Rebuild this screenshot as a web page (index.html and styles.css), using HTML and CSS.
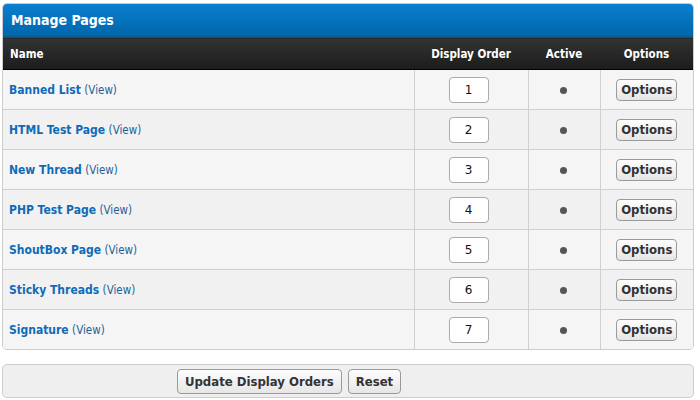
FILE: index.html
```html
<!DOCTYPE html>
<html>
<head>
<meta charset="utf-8">
<link rel="stylesheet" href="styles.css">
</head>
<body>
<div class="container">
  <div class="title">Manage Pages</div>
  <table class="grid">
    <thead>
      <tr>
        <th class="c-name">Name</th>
        <th class="c-order">Display Order</th>
        <th class="c-active">Active</th>
        <th class="c-opt">Options</th>
      </tr>
    </thead>
    <tbody>
      <tr><td class="c-name"><a class="page">Banned List</a> <a class="view">(View)</a></td><td class="c-order"><span class="num">1</span></td><td class="c-active"><span class="dot"></span></td><td class="c-opt"><span class="btn small">Options</span></td></tr>
      <tr><td class="c-name"><a class="page">HTML Test Page</a> <a class="view">(View)</a></td><td class="c-order"><span class="num">2</span></td><td class="c-active"><span class="dot"></span></td><td class="c-opt"><span class="btn small">Options</span></td></tr>
      <tr><td class="c-name"><a class="page">New Thread</a> <a class="view">(View)</a></td><td class="c-order"><span class="num">3</span></td><td class="c-active"><span class="dot"></span></td><td class="c-opt"><span class="btn small">Options</span></td></tr>
      <tr><td class="c-name"><a class="page">PHP Test Page</a> <a class="view">(View)</a></td><td class="c-order"><span class="num">4</span></td><td class="c-active"><span class="dot"></span></td><td class="c-opt"><span class="btn small">Options</span></td></tr>
      <tr><td class="c-name"><a class="page">ShoutBox Page</a> <a class="view">(View)</a></td><td class="c-order"><span class="num">5</span></td><td class="c-active"><span class="dot"></span></td><td class="c-opt"><span class="btn small">Options</span></td></tr>
      <tr><td class="c-name"><a class="page">Sticky Threads</a> <a class="view">(View)</a></td><td class="c-order"><span class="num">6</span></td><td class="c-active"><span class="dot"></span></td><td class="c-opt"><span class="btn small">Options</span></td></tr>
      <tr class="last"><td class="c-name"><a class="page">Signature</a> <a class="view">(View)</a></td><td class="c-order"><span class="num">7</span></td><td class="c-active"><span class="dot"></span></td><td class="c-opt"><span class="btn small">Options</span></td></tr>
    </tbody>
  </table>
</div>
<div class="buttons">
  <span class="btn">Update Display Orders</span>
  <span class="btn">Reset</span>
</div>
</body>
</html>
```
FILE: styles.css
```css
html, body {
  margin: 0;
  padding: 0;
  background: #fff;
}
body {
  padding: 3px 6px 0 2px;
  font-family: "DejaVu Sans Condensed", "DejaVu Sans", sans-serif;
  font-size: 12px;
  color: #333;
}
.container {
  border: 1px solid #ccc;
  border-radius: 5px;
  overflow: hidden;
  background: #f5f5f5;
  width: 690px;
}
.title {
  height: 33px;
  line-height: 33px;
  padding-left: 8px;
  background: linear-gradient(#0a7fd0, #0066aa);
  color: #fff;
  font-weight: bold;
  font-size: 14px;
  border-bottom: 1px solid #0b5a90;
  box-sizing: border-box;
}
.grid {
  width: 100%;
  border-collapse: collapse;
  table-layout: fixed;
}
.grid th {
  height: 31px;
  padding: 0;
  background: linear-gradient(#333, #1c1c1c);
  color: #fff;
  font-size: 11.5px;
  font-weight: bold;
  text-align: center;
  border-top: 1px solid #444;
  border-bottom: 1px solid #000;
}
.grid th.c-name {
  text-align: left;
  padding-left: 7px;
}
.c-name { width: auto; }
.c-order { width: 114px; }
.c-active { width: 72px; }
.c-opt { width: 93px; }
.grid td {
  height: 39px;
  padding: 0;
  text-align: center;
  border-bottom: 1px solid #d0d0d0;
  border-left: 1px solid #d0d0d0;
  background: #f5f5f5;
}
.grid td.c-order {
  padding-right: 5px;
}
.grid td.c-active {
  padding-right: 2px;
}
.grid tr:nth-child(even) td {
  background: #f1f1f1;
}
.grid tr.last td {
  border-bottom: none;
}
.grid td.c-name {
  text-align: left;
  padding-left: 6px;
  border-left: none;
}
.page {
  color: #0f6bb8;
  font-weight: bold;
  font-size: 12px;
}
.view {
  color: #1f5f98;
  font-size: 11.5px;
}
.num {
  display: inline-block;
  width: 38px;
  height: 24px;
  line-height: 24px;
  border: 1px solid #aaa;
  border-radius: 4px;
  background: #fff;
  color: #111;
  font-family: "DejaVu Sans", sans-serif;
  font-size: 12px;
  vertical-align: middle;
}
.dot {
  display: inline-block;
  width: 7px;
  height: 7px;
  border-radius: 50%;
  background: #555;
  vertical-align: middle;
}
.btn {
  display: inline-block;
  box-sizing: border-box;
  height: 25px;
  line-height: 23px;
  padding: 0 7px;
  border: 1px solid #999;
  border-radius: 4px;
  background: linear-gradient(#fdfdfd, #e6e6e6);
  color: #333;
  font-weight: bold;
  font-size: 13px;
  vertical-align: middle;
}
.btn.small {
  height: 22px;
  line-height: 20px;
  padding: 0 4px;
}
.buttons {
  margin-top: 14px;
  width: 690px;
  height: 32px;
  box-sizing: content-box;
  border: 1px solid #ccc;
  border-radius: 5px;
  background: #efefef;
  display: flex;
  align-items: center;
  gap: 6px;
}
.buttons .btn:first-child {
  margin-left: 174px;
}
```
